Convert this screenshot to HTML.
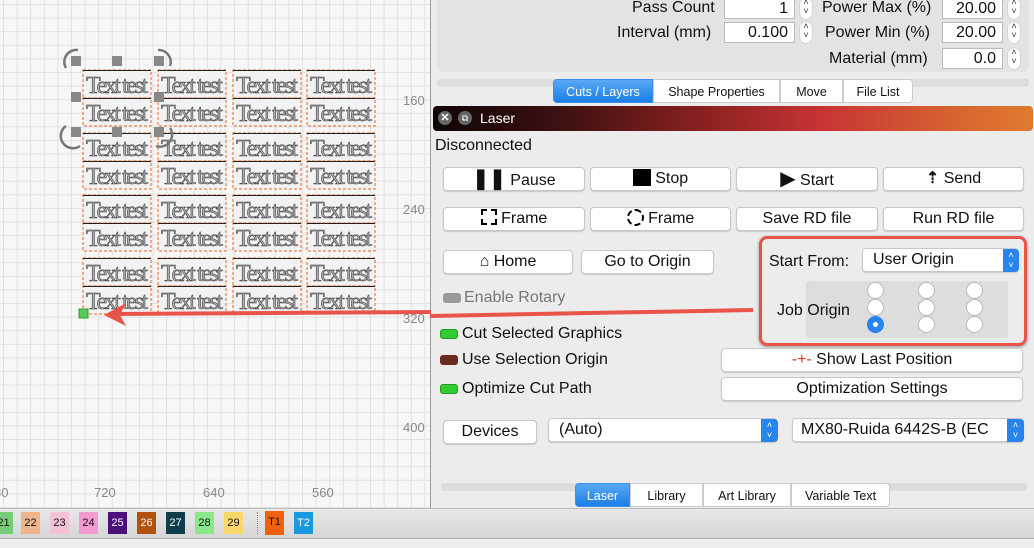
<!DOCTYPE html>
<html><head><meta charset="utf-8"><style>
*{margin:0;padding:0;box-sizing:border-box}
body{width:1034px;height:548px;overflow:hidden;font-family:"Liberation Sans",sans-serif;background:#ececec;position:relative;font-size:15px;color:#111}
.a{position:absolute}
#canvas{left:0;top:0;width:431px;height:508px;background-color:#f7f7f7;background-image:linear-gradient(#e0e0e0 1px,transparent 1px),linear-gradient(90deg,#e0e0e0 1px,transparent 1px);background-size:13.6px 13.6px;background-position:3px 4px;border-right:1px solid #999}
.lbl{color:#888;font-size:13px}
.btn{position:absolute;background:#fff;border:1px solid #c8c8c8;border-radius:4px;box-shadow:0 1px 1px rgba(0,0,0,.15);text-align:center;font-size:16px;line-height:22px;height:24px}
.inp{position:absolute;background:#fff;border:1px solid #bbb;height:21px;text-align:right;padding-right:6px;font-size:16px;line-height:19px}
.spin{position:absolute;width:12px;height:21px;background:#fff;border-radius:6px;font-size:9px;line-height:9px;text-align:center;color:#333;box-shadow:0 0 1px #888}
.tab{position:absolute;top:79px;height:24px;font-size:12.5px;line-height:24px;text-align:center;background:#fff;border:1px solid #ccc}
.t{position:absolute;font-size:16px}
.sw{position:absolute;top:512px;width:19px;height:22px;font-size:11px;line-height:22px;text-align:center}
.tog{position:absolute;width:18px;height:10px;border-radius:3px}
.rad{position:absolute;width:17px;height:17px;border-radius:50%;background:#fff;border:1px solid #bbb}
</style></head><body>
<div class="a" id="canvas"></div>
<div class="a lbl" style="left:403px;top:93px">160</div>
<div class="a lbl" style="left:403px;top:202px">240</div>
<div class="a lbl" style="left:403px;top:311px">320</div>
<div class="a lbl" style="left:403px;top:420px">400</div>
<div class="a lbl" style="left:-6px;top:485px">80</div>
<div class="a lbl" style="left:94px;top:485px">720</div>
<div class="a lbl" style="left:203px;top:485px">640</div>
<div class="a lbl" style="left:312px;top:485px">560</div>
<svg class="a" style="left:0;top:0" width="431" height="330">
<defs><g id="tile"><rect x="0" y="0" width="68" height="28" fill="#f2f2f2" stroke="#e8641e" stroke-dasharray="3,2" stroke-width="1"/><line x1="0" y1="0.5" x2="68" y2="0.5" stroke="#222"/><text x="3" y="23" font-family="Liberation Serif" font-size="24" fill="#aaa" stroke="#333" stroke-width="0.5" textLength="62">Text test</text></g></defs>
<g>
<use href="#tile" x="83" y="70"/><use href="#tile" x="83" y="98"/>
<use href="#tile" x="158" y="70"/><use href="#tile" x="158" y="98"/>
<use href="#tile" x="233" y="70"/><use href="#tile" x="233" y="98"/>
<use href="#tile" x="307" y="70"/><use href="#tile" x="307" y="98"/>
<use href="#tile" x="83" y="133"/><use href="#tile" x="83" y="161"/>
<use href="#tile" x="158" y="133"/><use href="#tile" x="158" y="161"/>
<use href="#tile" x="233" y="133"/><use href="#tile" x="233" y="161"/>
<use href="#tile" x="307" y="133"/><use href="#tile" x="307" y="161"/>
<use href="#tile" x="83" y="195"/><use href="#tile" x="83" y="223"/>
<use href="#tile" x="158" y="195"/><use href="#tile" x="158" y="223"/>
<use href="#tile" x="233" y="195"/><use href="#tile" x="233" y="223"/>
<use href="#tile" x="307" y="195"/><use href="#tile" x="307" y="223"/>
<use href="#tile" x="83" y="258"/><use href="#tile" x="83" y="286"/>
<use href="#tile" x="158" y="258"/><use href="#tile" x="158" y="286"/>
<use href="#tile" x="233" y="258"/><use href="#tile" x="233" y="286"/>
<use href="#tile" x="307" y="258"/><use href="#tile" x="307" y="286"/>
</g>
<g fill="#888"><rect x="71" y="56" width="10" height="10"/><rect x="112" y="56" width="10" height="10"/><rect x="154" y="56" width="10" height="10"/><rect x="71" y="92" width="10" height="10"/><rect x="154" y="92" width="10" height="10"/><rect x="71" y="127" width="10" height="10"/><rect x="112" y="127" width="10" height="10"/><rect x="154" y="127" width="10" height="10"/></g>
<g fill="none" stroke="#777" stroke-width="2.5"><path d="M66 68 A12 12 0 0 1 78 50"/><path d="M158 50 A12 12 0 0 1 170 66"/><path d="M66 126 A12 12 0 0 0 80 146"/><path d="M156 146 A12 12 0 0 0 170 128"/></g>
<rect x="79" y="309" width="9" height="9" fill="#5c5" stroke="#393"/>
<path d="M112 314 L750 310" stroke="#e8534a" stroke-width="4"/>
<path d="M104 315 L126 303 L120 315 L126 326 Z" fill="#e8534a"/>
</svg>
<svg class="a" style="left:430px;top:303px" width="330" height="20"><path d="M0 13 L323 7" stroke="#e8534a" stroke-width="4"/></svg>

<div class="a" style="left:437px;top:0;width:592px;height:72px;background:#e3e3e3;border-radius:0 0 6px 6px"></div>
<div class="t" style="left:632px;top:-1px">Pass Count</div>
<div class="inp" style="left:724px;top:-2px;width:71px">1</div><div class="spin" style="left:800px;top:-2px">˄<br>˅</div>
<div class="t" style="left:822px;top:-1px">Power Max (%)</div>
<div class="inp" style="left:942px;top:-2px;width:61px">20.00</div><div class="spin" style="left:1008px;top:-2px">˄<br>˅</div>
<div class="t" style="left:617px;top:24px">Interval (mm)</div>
<div class="inp" style="left:724px;top:22px;width:71px">0.100</div><div class="spin" style="left:800px;top:22px">˄<br>˅</div>
<div class="t" style="left:825px;top:24px">Power Min (%)</div>
<div class="inp" style="left:942px;top:22px;width:61px">20.00</div><div class="spin" style="left:1008px;top:22px">˄<br>˅</div>
<div class="t" style="left:829px;top:50px">Material (mm)</div>
<div class="inp" style="left:942px;top:48px;width:61px">0.0</div><div class="spin" style="left:1008px;top:48px">˄<br>˅</div>
<div class="a" style="left:437px;top:79px;width:592px;height:8px;background:#ddd;border-radius:3px"></div>
<div class="tab" style="left:553px;width:100px;background:linear-gradient(#5aa8f5,#1a7ee8);color:#fff;border-color:#3b8ee8;border-radius:4px 0 0 4px">Cuts / Layers</div>
<div class="tab" style="left:653px;width:127px">Shape Properties</div>
<div class="tab" style="left:780px;width:63px">Move</div>
<div class="tab" style="left:843px;width:70px;border-radius:0 4px 4px 0">File List</div>

<div class="a" style="left:433px;top:106px;width:600px;height:25px;border-radius:4px;background:linear-gradient(90deg,#0e0505 0%,#3a1010 20%,#8a2020 45%,#c83434 65%,#d86a30 90%,#e07a30 100%)"></div>
<div class="a" style="left:438px;top:111px;width:14px;height:14px;border-radius:50%;background:#666;color:#fff;font-size:11px;line-height:14px;text-align:center;font-weight:bold">✕</div>
<div class="a" style="left:458px;top:111px;width:14px;height:14px;border-radius:50%;background:#666;color:#fff;font-size:9px;line-height:14px;text-align:center">⧉</div>
<div class="a" style="left:480px;top:110px;color:#fff;font-size:14px">Laser</div>
<div class="t" style="left:435px;top:137px">Disconnected</div>

<div class="btn" style="left:443px;top:167px;width:142px"><b style="font-size:20px">❚❚</b> Pause</div>
<div class="btn" style="left:590px;top:167px;width:141px"><span style="display:inline-block;width:18px;height:17px;background:#000;vertical-align:-3px"></span> Stop</div>
<div class="btn" style="left:736px;top:167px;width:142px"><span style="font-size:20px">▶</span> Start</div>
<div class="btn" style="left:883px;top:167px;width:141px"><b>⇡</b> Send</div>
<div class="btn" style="left:443px;top:207px;width:142px"><span style="display:inline-block;width:16px;height:16px;border:2px dashed #000;vertical-align:-2px"></span> Frame</div>
<div class="btn" style="left:590px;top:207px;width:141px"><span style="display:inline-block;width:17px;height:17px;border:2px dashed #000;border-radius:50%;vertical-align:-3px"></span> Frame</div>
<div class="btn" style="left:736px;top:207px;width:142px">Save RD file</div>
<div class="btn" style="left:883px;top:207px;width:141px">Run RD file</div>
<div class="btn" style="left:443px;top:250px;width:130px">⌂ Home</div>
<div class="btn" style="left:581px;top:250px;width:133px">Go to Origin</div>

<div class="tog" style="left:443px;top:293px;background:#999"></div>
<div class="t" style="left:464px;top:289px;color:#777">Enable Rotary</div>
<div class="tog" style="left:440px;top:329px;background:#3c3;border:1px solid #292"></div>
<div class="t" style="left:462px;top:325px">Cut Selected Graphics</div>
<div class="tog" style="left:440px;top:355px;background:#6b2a20"></div>
<div class="t" style="left:462px;top:351px">Use Selection Origin</div>
<div class="tog" style="left:440px;top:384px;background:#3c3;border:1px solid #292"></div>
<div class="t" style="left:462px;top:380px">Optimize Cut Path</div>

<div class="a" style="left:759px;top:236px;width:268px;height:110px;border:3px solid #e8534a;border-radius:8px;box-shadow:0 1px 3px rgba(0,0,0,.4)"></div>
<div class="t" style="left:769px;top:253px">Start From:</div>
<div class="btn" style="left:862px;top:248px;width:157px;height:24px;text-align:left;padding-left:10px">User Origin</div>
<div class="a" style="left:1003px;top:249px;width:16px;height:23px;background:#2a84ee;border-radius:0 4px 4px 0;color:#fff;font-size:9px;line-height:10px;text-align:center;padding-top:1px">˄<br>˅</div>
<div class="a" style="left:806px;top:281px;width:202px;height:57px;background:#ddd;border-radius:3px"></div>
<div class="t" style="left:777px;top:302px">Job Origin</div>
<div class="rad" style="left:867px;top:282px"></div><div class="rad" style="left:867px;top:299px"></div><div class="rad" style="left:867px;top:316px;background:#2a84ee;border-color:#2a84ee"><div style="width:5px;height:5px;background:#fff;border-radius:50%;margin:5px"></div></div>
<div class="rad" style="left:918px;top:282px"></div><div class="rad" style="left:918px;top:299px"></div><div class="rad" style="left:918px;top:316px"></div>
<div class="rad" style="left:966px;top:282px"></div><div class="rad" style="left:966px;top:299px"></div><div class="rad" style="left:966px;top:316px"></div>

<div class="btn" style="left:721px;top:348px;width:302px"><span style="color:#e33">-+-</span> Show Last Position</div>
<div class="btn" style="left:721px;top:377px;width:302px">Optimization Settings</div>

<div class="btn" style="left:443px;top:420px;width:94px">Devices</div>
<div class="btn" style="left:548px;top:418px;width:230px;text-align:left;padding-left:10px">(Auto)</div>
<div class="a" style="left:761px;top:419px;width:17px;height:23px;background:#2a84ee;border-radius:0 4px 4px 0;color:#fff;font-size:9px;line-height:10px;text-align:center;padding-top:1px">˄<br>˅</div>
<div class="btn" style="left:792px;top:418px;width:232px;text-align:left;padding-left:8px;overflow:hidden;white-space:nowrap">MX80-Ruida 6442S-B (EC</div>
<div class="a" style="left:1007px;top:419px;width:17px;height:23px;background:#2a84ee;border-radius:0 4px 4px 0;color:#fff;font-size:9px;line-height:10px;text-align:center;padding-top:1px">˄<br>˅</div>

<div class="a" style="left:441px;top:483px;width:586px;height:8px;background:#ddd;border-radius:3px"></div>
<div class="tab" style="top:483px;left:575px;width:55px;background:linear-gradient(#5aa8f5,#1a7ee8);color:#fff;border-color:#3b8ee8;border-radius:4px 0 0 4px">Laser</div>
<div class="tab" style="top:483px;left:630px;width:73px">Library</div>
<div class="tab" style="top:483px;left:703px;width:88px">Art Library</div>
<div class="tab" style="top:483px;left:791px;width:99px;border-radius:0 4px 4px 0">Variable Text</div>

<div class="a" style="left:0;top:508px;width:1034px;height:30px;background:linear-gradient(#e8e8e8,#d6d6d6);border-top:1px solid #bbb"></div>
<div class="a" style="left:0;top:538px;width:1034px;height:10px;background:#eee;border-top:1px solid #aaa"></div>
<div class="sw" style="left:-6px;background:#7c7;">21</div>
<div class="sw" style="left:21px;background:#f0b48a">22</div>
<div class="sw" style="left:50px;background:#f6c0d8">23</div>
<div class="sw" style="left:79px;background:#f59ad0">24</div>
<div class="sw" style="left:108px;background:#4b0e7a;color:#fff">25</div>
<div class="sw" style="left:137px;background:#b0520c;color:#fff">26</div>
<div class="sw" style="left:166px;background:#0f3d4a;color:#fff">27</div>
<div class="sw" style="left:195px;background:#8be88a">28</div>
<div class="sw" style="left:224px;background:#f8d86a">29</div>
<div class="a" style="left:257px;top:512px;height:22px;border-left:1px dotted #888"></div>
<div class="sw" style="left:265px;background:#f06010;top:511px;height:24px">T1</div>
<div class="sw" style="left:294px;background:#1a98e0;color:#fff">T2</div>
</body></html>
